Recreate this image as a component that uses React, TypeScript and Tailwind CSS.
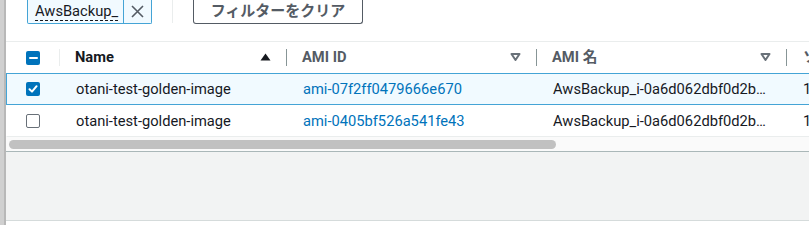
import React from "react";

const font = { fontFamily: "Roboto, 'Noto Sans CJK JP', sans-serif" };

function SortUp() {
  return (
    <svg width="11" height="8" viewBox="0 0 11 8">
      <path d="M0.5 7.5 L5.5 0.5 L10.5 7.5 Z" fill="#16191f" />
    </svg>
  );
}
function SortNone() {
  return (
    <svg width="11" height="8" viewBox="0 0 11 8">
      <path d="M1.5 1 L9.5 1 L5.5 7 Z" fill="none" stroke="#687078" strokeWidth="2" strokeLinejoin="round" />
    </svg>
  );
}

function CheckBox({ state }: { state: "checked" | "indet" | "off" }) {
  if (state === "off")
    return <div className="w-[14px] h-[14px] rounded-[2px] border-[1.5px] border-[#687078] bg-white" />;
  return (
    <div className="w-[14px] h-[14px] rounded-[2px] bg-[#0073bb] flex items-center justify-center">
      {state === "checked" ? (
        <svg width="12" height="12" viewBox="0 0 12 12">
          <path d="M2.5 6.2 L5 8.6 L9.6 3.2" fill="none" stroke="white" strokeWidth="2" strokeLinecap="round" strokeLinejoin="round" />
        </svg>
      ) : (
        <div className="w-[9px] h-[2px] bg-white rounded-[1px]" />
      )}
    </div>
  );
}

function Row({ selected, ami }: { selected: boolean; ami: string }) {
  return (
    <div
      className={
        "flex h-[32px] items-center text-[14.7px] text-[#16191f] border-y " +
        (selected ? "bg-[#f1faff] border-[#44a4d6] border-l" : "bg-white border-t-transparent border-b-[#eaeded] border-l border-l-transparent")
      }
    >
      <div className="w-[53px] shrink-0 pl-[19px] flex items-center">
        <CheckBox state={selected ? "checked" : "off"} />
      </div>
      <div className="w-[227px] shrink-0 pl-[16px] whitespace-nowrap">otani-test-golden-image</div>
      <div className="w-[250px] shrink-0 pl-[16px] text-[#0073bb] whitespace-nowrap">{ami}</div>
      <div className="w-[250px] shrink-0 pl-[16px] pr-[20px] truncate">AwsBackup_i-0a6d062dbf0d2b5c1e</div>
      <div className="flex-1 pl-[16px] overflow-hidden whitespace-nowrap">1</div>
    </div>
  );
}

export default function App() {
  return (
    <div className="w-[809px] h-[225px] bg-white flex overflow-hidden" style={font}>
      <div className="w-[4px] shrink-0 bg-[#d0d0d0]" />
      <div className="w-[2px] shrink-0 bg-[#b8b8b8]" />
      <div className="flex-1 flex flex-col min-w-0">
        {/* filter area */}
        <div className="h-[42px] shrink-0 flex items-start border-b border-[#eaeded]">
          <div className="ml-[21px] h-[24px] w-[125px] flex border border-t-0 border-[#44a4d6] bg-[#f1faff] rounded-b-[2px]">
            <div className="w-[95px] pl-[7px] text-[14.7px] text-[#16191f] leading-[20px] pt-[1px] whitespace-nowrap">
              <span className="border-b border-dashed border-[#16191f]">AwsBackup_</span>
            </div>
            <div className="flex-1 border-l border-[#44a4d6] flex items-center justify-center">
              <svg width="15" height="15" viewBox="0 0 15 15">
                <path d="M2 2 L13 13 M13 2 L2 13" stroke="#545b64" strokeWidth="1.6" />
              </svg>
            </div>
          </div>
          <div className="ml-[20px] w-px h-[23px] bg-[#eaeded]" />
          <div className="ml-[20px] h-[24px] w-[170px] border border-t-0 border-[#545b64] rounded-b-[3px] flex items-center justify-center text-[15px] font-bold text-[#545b64]">
            フィルターをクリア
          </div>
        </div>
        {/* header */}
        <div className="h-[31px] shrink-0 flex items-center text-[14.7px] font-bold text-[#545b64]">
          <div className="w-[54px] shrink-0 pl-[20px] flex items-center justify-between pr-0">
            <CheckBox state="indet" />
            <div className="w-px h-[17px] bg-[#eaeded]" />
          </div>
          <div className="w-[227px] shrink-0 pl-[15px] flex items-center justify-between">
            <span className="text-[#16191f]">Name</span>
            <div className="flex items-center gap-[15px]">
              <SortUp />
              <div className="w-px h-[17px] bg-[#879596]" />
            </div>
          </div>
          <div className="w-[250px] shrink-0 pl-[15px] flex items-center justify-between">
            <span>AMI ID</span>
            <div className="flex items-center gap-[15px]">
              <SortNone />
              <div className="w-px h-[17px] bg-[#879596]" />
            </div>
          </div>
          <div className="w-[250px] shrink-0 pl-[15px] flex items-center justify-between">
            <span>AMI 名</span>
            <div className="flex items-center gap-[15px]">
              <SortNone />
              <div className="w-px h-[17px] bg-[#879596]" />
            </div>
          </div>
          <div className="flex-1 pl-[16px] overflow-hidden whitespace-nowrap">ソース</div>
        </div>
        <Row selected ami="ami-07f2ff0479666e670" />
        <Row selected={false} ami="ami-0405bf526a541fe43" />
        {/* scrollbar */}
        <div className="h-[15px] shrink-0 bg-[#fafafa] border-b border-[#aab7b8] flex items-center pl-[3px]">
          <div className="w-[547px] h-[9px] rounded-full bg-[#c1c1c1]" />
        </div>
        <div className="h-[69px] shrink-0 bg-[#f2f3f3] border-b border-[#d5dbdb]" />
      </div>
    </div>
  );
}
